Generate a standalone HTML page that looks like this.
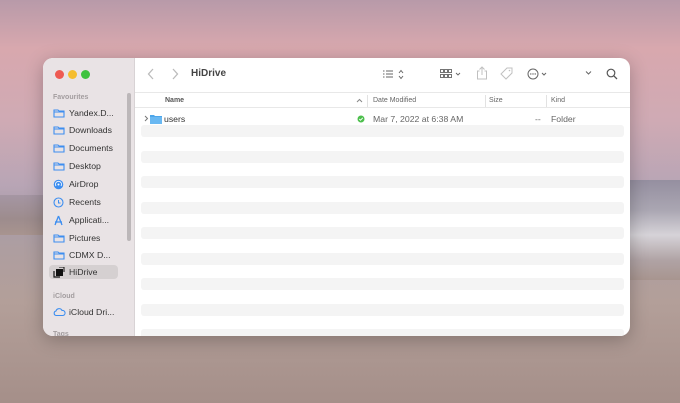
<!DOCTYPE html>
<html><head><style>
*{margin:0;padding:0;box-sizing:border-box}
body{width:680px;height:403px;overflow:hidden;font-family:"Liberation Sans",sans-serif;position:relative;
background:linear-gradient(180deg,#b89aa9 0%,#d8a8ae 12%,#cfaab4 30%,#b8a5b5 46%,#a99ca8 54%,#ae9ea0 62%,#b39f99 75%,#a58f89 100%);}
.sea{position:absolute;left:620px;top:180px;width:60px;height:100px;background:linear-gradient(180deg,#958fa0,#aaa6b2 30%,#d6d3d8 55%,#b0a3a5 80%,#a8958f);}
.lsea{position:absolute;left:0;top:195px;width:43px;height:40px;background:linear-gradient(180deg,#a596a3,#9d8c8d 60%,#a8948f)}
.win{position:absolute;left:43px;top:58px;width:587px;height:278px;border-radius:10px;overflow:hidden;background:#fff;box-shadow:0 4px 18px rgba(0,0,0,.25)}
.side{position:absolute;left:0;top:0;width:92px;height:100%;background:#e9e3e5;border-right:1px solid #d8d3d5}
.dot{position:absolute;top:12px;width:9px;height:9px;border-radius:50%}
.sh{position:absolute;left:10px;font-size:7px;color:#a39d9f;font-weight:bold}
.it{position:absolute;left:10px;font-size:8.7px;color:#333;height:14px;line-height:14px;padding-left:16px;width:70px;white-space:nowrap}
.it svg{position:absolute;left:0;top:2px}
.sel{background:#d5d0d1;border-radius:4px;left:6px;width:69px;padding-left:20px}
.sel svg{left:4px}
.scroll{position:absolute;left:84px;top:35px;width:4px;height:148px;background:#bcb7b9;border-radius:2px}
.t{position:absolute;color:#444}
.hdr{position:absolute;left:92px;top:34px;right:0;height:16px;border-top:1px solid #e8e8e8;border-bottom:1px solid #e8e8e8;font-size:7px;color:#666}
.hdr span{position:absolute;top:4px}
.vl{position:absolute;top:2px;width:1px;height:12px;background:#e2e2e2}
.st{position:absolute;left:98px;width:483px;height:12px;background:#f4f4f4;border-radius:3px}
svg.a{position:absolute}
</style></head><body>
<div class="lsea"></div><div class="sea"></div>
<div class="win">
 <div class="side">
  <div class="dot" style="left:12px;background:#ee5a52"></div>
  <div class="dot" style="left:25px;background:#f5bd2f"></div>
  <div class="dot" style="left:38px;background:#3fc23f"></div>
  <div class="sh" style="top:36px">Favourites</div>
  <div class="it" style="top:48px"><svg width="12" height="10"><path d="M1 2h4l1 1h5v6H1z" fill="none" stroke="#3d8ef0" stroke-width="1.1"/><path d="M1 4h10" stroke="#3d8ef0"/></svg>Yandex.D...</div>
  <div class="it" style="top:65px"><svg width="12" height="10"><path d="M1 2h4l1 1h5v6H1z" fill="none" stroke="#3d8ef0" stroke-width="1.1"/><path d="M1 4h10" stroke="#3d8ef0"/></svg>Downloads</div>
  <div class="it" style="top:83px"><svg width="12" height="10"><path d="M1 2h4l1 1h5v6H1z" fill="none" stroke="#3d8ef0" stroke-width="1.1"/><path d="M1 4h10" stroke="#3d8ef0"/></svg>Documents</div>
  <div class="it" style="top:101px"><svg width="12" height="10"><path d="M1 2h4l1 1h5v6H1z" fill="none" stroke="#3d8ef0" stroke-width="1.1"/><path d="M1 4h10" stroke="#3d8ef0"/></svg>Desktop</div>
  <div class="it" style="top:119px"><svg width="12" height="11"><circle cx="5.5" cy="5.5" r="4.8" fill="#3d8ef0"/><path d="M3 7a3 3 0 1 1 5 0" fill="none" stroke="#fff" stroke-width=".9"/><circle cx="5.5" cy="5.5" r="1" fill="#fff"/></svg>AirDrop</div>
  <div class="it" style="top:137px"><svg width="12" height="11"><circle cx="5.5" cy="5.5" r="4.5" fill="none" stroke="#3d8ef0" stroke-width="1.1"/><path d="M5.5 3v3h2" fill="none" stroke="#3d8ef0"/></svg>Recents</div>
  <div class="it" style="top:155px"><svg width="12" height="11"><path d="M5.5 1L2 10M5.5 1L9 10M2 7h7" fill="none" stroke="#3d8ef0" stroke-width="1.3"/></svg>Applicati...</div>
  <div class="it" style="top:173px"><svg width="12" height="10"><path d="M1 2h4l1 1h5v6H1z" fill="none" stroke="#3d8ef0" stroke-width="1.1"/><path d="M1 4h10" stroke="#3d8ef0"/></svg>Pictures</div>
  <div class="it" style="top:190px"><svg width="12" height="10"><path d="M1 2h4l1 1h5v6H1z" fill="none" stroke="#3d8ef0" stroke-width="1.1"/><path d="M1 4h10" stroke="#3d8ef0"/></svg>CDMX D...</div>
  <div class="it sel" style="top:207px"><svg width="12" height="11"><rect x="3" y="2" width="7" height="7" fill="#111"/><path d="M1 4v6h6" fill="none" stroke="#111" stroke-width="1.2"/><path d="M6 0h5v5" fill="none" stroke="#111" stroke-width="1"/></svg>HiDrive</div>
  <div class="sh" style="top:235px">iCloud</div>
  <div class="it" style="top:247px"><svg width="13" height="10"><path d="M3 8.5a2.3 2.3 0 0 1 0-4.5a3.2 3.2 0 0 1 6-.5a2.5 2.5 0 0 1 1 5z" fill="none" stroke="#3d8ef0" stroke-width="1.1"/></svg>iCloud Dri...</div>
  <div class="sh" style="top:273px">Tags</div>
  <div class="scroll"></div>
 </div>
 <svg class="a" style="left:104px;top:10px" width="40" height="12"><path d="M6 1L1.5 6L6 11" fill="none" stroke="#bbb" stroke-width="1.3"/><path d="M26 1L30.5 6L26 11" fill="none" stroke="#bbb" stroke-width="1.3"/></svg>
 <div class="t" style="left:148px;top:10px;font-size:10px;font-weight:bold;color:#444">HiDrive</div>
 <svg class="a" style="left:340px;top:11px" width="24" height="11"><g stroke="#666" stroke-width="1"><path d="M0 2h1.5M0 5h1.5M0 8h1.5M3 2h7M3 5h7M3 8h7"/><path d="M16 4l2-2.5l2 2.5M16 7l2 2.5l2-2.5" fill="none"/></g></svg>
 <svg class="a" style="left:397px;top:11px" width="24" height="10"><g fill="none" stroke="#666" stroke-width=".9"><rect x=".5" y=".5" width="3" height="3"/><rect x="4.5" y=".5" width="3" height="3"/><rect x="8.5" y=".5" width="3" height="3"/><rect x=".5" y="5.5" width="3" height="3"/><rect x="4.5" y="5.5" width="3" height="3"/><rect x="8.5" y="5.5" width="3" height="3"/><path d="M16 4l2 2l2-2"/></g></svg>
 <svg class="a" style="left:433px;top:8px" width="12" height="14"><g fill="none" stroke="#c0c0c0" stroke-width="1"><path d="M3.5 5H1.5v8h9V5h-2M6 9V1M3.5 3.5L6 1l2.5 2.5"/></g></svg>
 <svg class="a" style="left:457px;top:9px" width="14" height="14"><path d="M7 1h5v5l-6 6l-5-5z" fill="none" stroke="#c0c0c0" stroke-width="1"/><circle cx="9.5" cy="3.5" r=".8" fill="#c0c0c0"/></svg>
 <svg class="a" style="left:484px;top:10px" width="24" height="12"><circle cx="6" cy="6" r="5" fill="none" stroke="#666" stroke-width="1"/><g fill="#666"><circle cx="3.8" cy="6" r=".7"/><circle cx="6" cy="6" r=".7"/><circle cx="8.2" cy="6" r=".7"/></g><path d="M15 5l2 2l2-2" fill="none" stroke="#666"/></svg>
 <svg class="a" style="left:542px;top:12px" width="8" height="6"><path d="M1 1.5l2.5 2.5l2.5-2.5" fill="none" stroke="#666"/></svg>
 <svg class="a" style="left:563px;top:10px" width="12" height="12"><circle cx="5" cy="5" r="3.8" fill="none" stroke="#555" stroke-width="1.2"/><path d="M7.8 7.8L11 11" stroke="#555" stroke-width="1.3"/></svg>
 <div class="hdr">
  <span style="left:30px;font-weight:bold;color:#555">Name</span>
  <svg class="a" style="left:221px;top:5px" width="7" height="5"><path d="M1 4l2.5-2.5L6 4" fill="none" stroke="#888"/></svg>
  <i class="vl" style="left:232px"></i><span style="left:238px">Date Modified</span>
  <i class="vl" style="left:350px"></i><span style="left:354px">Size</span>
  <i class="vl" style="left:411px"></i><span style="left:416px">Kind</span>
 </div>
 <svg class="a" style="left:101px;top:57px" width="5" height="7"><path d="M1 1l2.5 2.5L1 6" fill="none" stroke="#777"/></svg>
 <svg class="a" style="left:107px;top:56px" width="12" height="10"><path d="M0 1h4l1 1h7v8H0z" fill="#4da6ea"/><rect x="0" y="3" width="12" height="7" fill="#69b8f2"/></svg>
 <div class="t" style="left:121px;top:56px;font-size:8.7px;color:#333">users</div>
 <svg class="a" style="left:314px;top:57px" width="8" height="8"><circle cx="4" cy="4" r="3.5" fill="#4cbf4c"/><path d="M2.3 4l1.2 1.2L5.8 2.8" fill="none" stroke="#fff" stroke-width=".9"/></svg>
 <div class="t" style="left:330px;top:56px;font-size:8.7px;color:#666">Mar 7, 2022 at 6:38 AM</div>
 <div class="t" style="left:492px;top:56px;font-size:8.7px;color:#666">--</div>
 <div class="t" style="left:508px;top:56px;font-size:8.7px;color:#666">Folder</div>
 <div class="st" style="top:67px"></div><div class="st" style="top:93px"></div>
 <div class="st" style="top:118px"></div><div class="st" style="top:144px"></div>
 <div class="st" style="top:169px"></div><div class="st" style="top:195px"></div>
 <div class="st" style="top:220px"></div><div class="st" style="top:246px"></div>
 <div class="st" style="top:271px"></div>
</div>
</body></html>
